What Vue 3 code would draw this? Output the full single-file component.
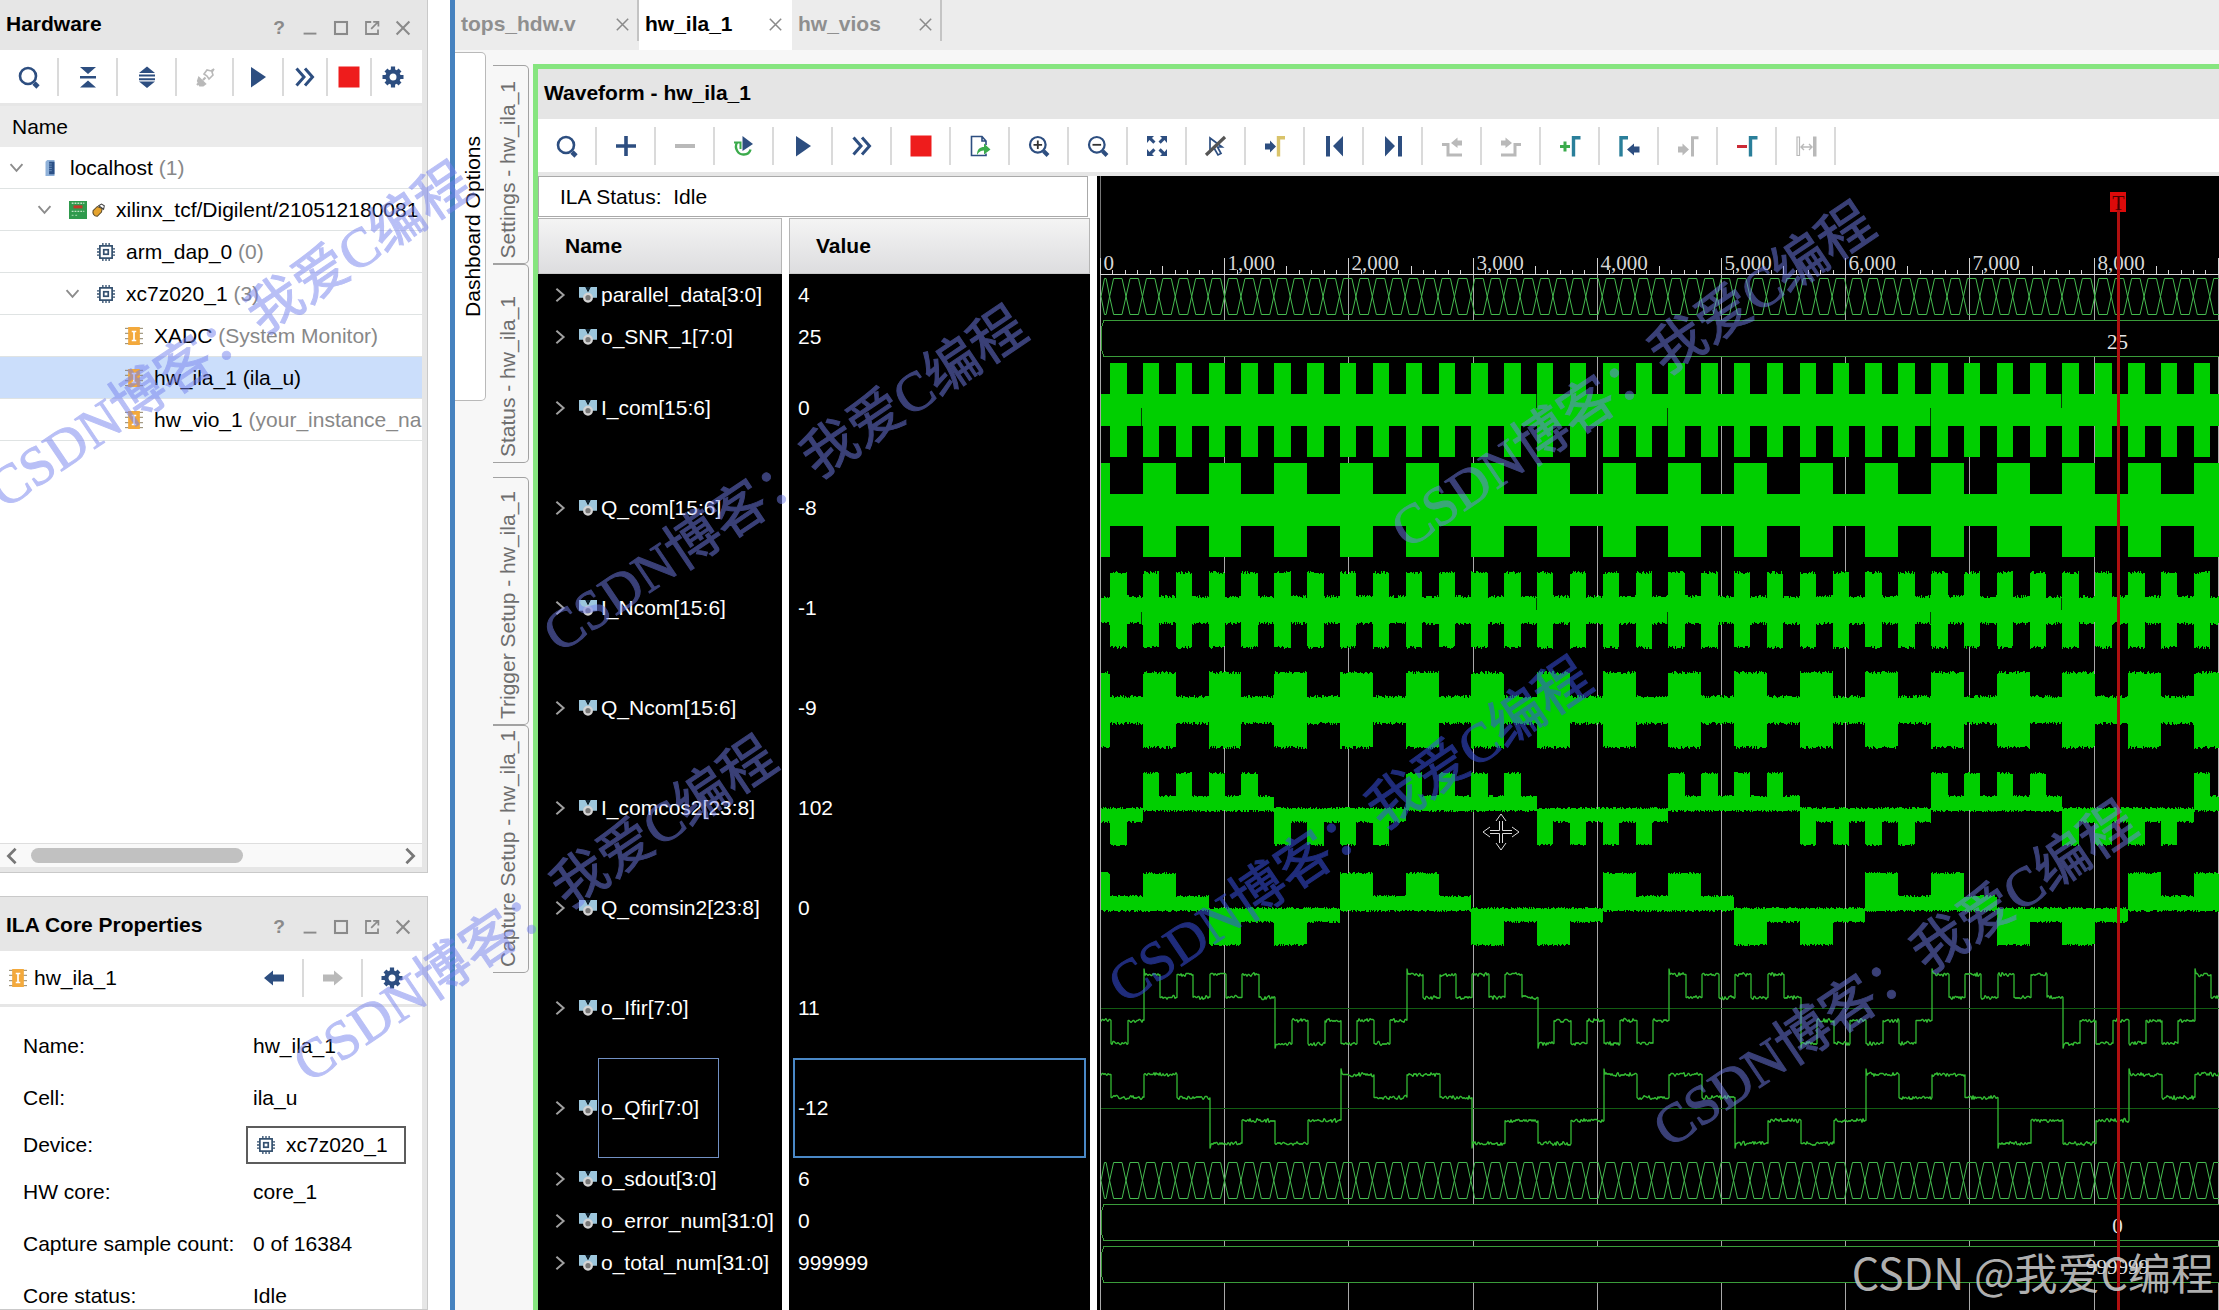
<script setup>
import { h } from 'vue'

const NAVY = '#2d4e80'
const GREY = '#b9b9b9'
const TEAL = '#2a7f9a'

const icons = {
  help: `<text x="10" y="18" text-anchor="middle" font-family="Liberation Sans, sans-serif" font-weight="bold" font-size="24" fill="#8a8a8a">?</text>`,
  min: `<path d="M2 17h16" stroke="#8a8a8a" stroke-width="2.4"/>`,
  max: `<rect x="2.500" y="2.500" width="15" height="15" fill="none" stroke="#8a8a8a" stroke-width="2.6"/>`,
  pop: `<path d="M9 2.500H2.500v15h15V12M11.500 2.200h6.500v6M17.500 2.500L9 11" fill="none" stroke="#8a8a8a" stroke-width="2.200"/>`,
  close: `<path d="M2 2l16 16M18 2L2 18" stroke="#8a8a8a" stroke-width="2.600"/>`,
  tabx: `<path d="M4 4l12 12M16 4L4 16" stroke="#8a8a8a" stroke-width="1.600"/>`,
  search: `<circle cx="9" cy="9" r="8" fill="none" stroke="${NAVY}" stroke-width="2.600"/><path d="M15 16l4 4" stroke="${NAVY}" stroke-width="4.600"/>`,
  collapse: `<path d="M2 0h16l-8 7zM2 20.500h16l-8-7zM2 9h16v2.600H2z" fill="${NAVY}"/>`,
  expand: `<path d="M10 -.5l8 6.500H2zM10 21l8-6.500H2zM2 7.600h16v2H2zM2 11.200h16v2H2z" fill="${NAVY}"/>`,
  plug: `<path d="M2 18l3-3M4 11l6 6-2 1.500H5L3 14zM8 13l2.500-2.500" stroke="${GREY}" stroke-width="2.200" fill="${GREY}"/><path d="M9 7l3-4 4 1 3-2-2 3 1 3-4 4-2-3z" fill="none" stroke="${GREY}" stroke-width="1.600"/>`,
  play: `<path d="M3 0l15 10L3 20.500z" fill="${NAVY}"/>`,
  ff: `<path d="M1.500 1.500L9 10l-7.500 8.500M10 1.500l7.500 8.500-7.500 8.500" fill="none" stroke="${NAVY}" stroke-width="3"/>`,
  stop: `<rect x="-.5" y="-.5" width="21" height="21" fill="#ee1c1c"/>`,
  gear: `<path d="M10 -.5v21M-.5 10h21M3 3l14 14M17 3L3 17" stroke="${NAVY}" stroke-width="4.200"/><circle cx="10" cy="10" r="5.600" fill="#fff" stroke="${NAVY}" stroke-width="4.200"/>`,
  add: `<path d="M10 0v20M0 10h20" stroke="${NAVY}" stroke-width="3.600"/>`,
  sub: `<path d="M0 10h20" stroke="${GREY}" stroke-width="4"/>`,
  restart: `<path d="M8.500 0L19 8 8.500 15z" fill="${NAVY}"/><path d="M3 6.500C0 12 4 19 10 18.500c4 0 6-3 6.500-5" fill="none" stroke="#3bab4c" stroke-width="2.400"/><path d="M0 6.500h6.500V13" fill="none" stroke="#3bab4c" stroke-width="2"/>`,
  exportf: `<path d="M16 9V5l-4-4.500H1.500v19H16v-2M12 .5V5h4" fill="none" stroke="${NAVY}" stroke-width="1.600"/><path d="M7 19c0-6 3-8 7-8V7.500l6.500 6L14 18.500v-4c-3 0-5 1-7 4.500z" fill="#3bab4c"/>`,
  zin: `<circle cx="8.800" cy="8.800" r="7.800" fill="none" stroke="${NAVY}" stroke-width="2.200"/><path d="M14.500 15l4.500 4.500" stroke="${NAVY}" stroke-width="4"/><path d="M8.800 4.500v8.600M4.500 8.800h8.600" stroke="#333" stroke-width="1.800"/>`,
  zout: `<circle cx="8.800" cy="8.800" r="7.800" fill="none" stroke="${NAVY}" stroke-width="2.200"/><path d="M14.500 15l4.500 4.500" stroke="${NAVY}" stroke-width="4"/><path d="M4.500 8.800h8.600" stroke="#333" stroke-width="1.800"/>`,
  fit: `<path d="M0 0h7L5 2l3.500 3.500-2.200 2.200L2.500 4 0 7zM20 0h-7l2 2-3.500 3.500 2.200 2.200L17.500 4 20 7zM0 20h7l-2-2 3.500-3.500-2.200-2.200L2.500 16 0 13zM20 20h-7l2-2-3.500-3.500 2.200-2.200 3.800 3.700L20 13z" fill="${NAVY}"/>`,
  nocur: `<path d="M4 2v14l4-4 4 7 3-1.500-3.500-6.500H16z" fill="none" stroke="${NAVY}" stroke-width="1.700"/><path d="M19 1L0 19" stroke="#555" stroke-width="3.200"/>`,
  gocur: `<path d="M0 7.500h5V4.500l6 6-6 6v-3H0z" fill="${NAVY}"/><path d="M13.500 20.500V1.800H20" fill="none" stroke="#d9c36a" stroke-width="3.400"/>`,
  first: `<path d="M2 0h4v20.500H2zM19 0v20.500L9 10z" fill="${NAVY}"/>`,
  last: `<path d="M15 0h4v20.500h-4zM2 0v20.500L12 10z" fill="${NAVY}"/>`,
  prevt: `<path d="M0 8.500h6V19h14" fill="none" stroke="${GREY}" stroke-width="3"/><path d="M20 4.500h-4.500V1.500L9 7l6.500 5V9.500H20z" fill="${GREY}"/>`,
  nextt: `<path d="M20 8.500h-6V19H0" fill="none" stroke="${GREY}" stroke-width="3"/><path d="M0 4.500h4.500V1.500L11 7l-6.500 5V9.500H0z" fill="${GREY}"/>`,
  addm: `<path d="M5 5.500v10M0 10.500h10" stroke="#3bab4c" stroke-width="3"/><path d="M13.500 20.500V1.800H20.500" fill="none" stroke="${TEAL}" stroke-width="3.400"/>`,
  prevm: `<path d="M2 20.500V1.800h7" fill="none" stroke="${TEAL}" stroke-width="3.400"/><path d="M20.500 10.500h-5.500v-3l-7 6 7 6v-3h5.500z" fill="${NAVY}"/>`,
  nextm: `<path d="M0 10.500h4.500v-3l6.500 6-6.500 6v-3H0z" fill="${GREY}"/><path d="M14.500 20.500V1.800H20.500" fill="none" stroke="${GREY}" stroke-width="3"/>`,
  delm: `<path d="M0 10.500h10" stroke="#cc2a36" stroke-width="3"/><path d="M13.500 20.500V1.800H20.500" fill="none" stroke="${TEAL}" stroke-width="3.400"/>`,
  span: `<path d="M1 1h2.500v18.500H1z" fill="none" stroke="${GREY}" stroke-width="1.200"/><path d="M17 .5h3.500v20H17z" fill="${GREY}"/><path d="M5.500 11h10M8 8l-3 3 3 3M13 8l3 3-3 3" fill="none" stroke="${GREY}" stroke-width="1.400"/>`,
  back: `<path d="M0 10l9-7.500V6.500h11v7H9v4z" fill="${NAVY}"/>`,
  fwd: `<path d="M20 10l-9-7.500V6.500H0v7h11v4z" fill="${GREY}"/>`,
  down: `<path d="M3 6l7 8 7-8" fill="none" stroke="#8c8c8c" stroke-width="2.200"/>`,
  right: `<path d="M6 3l8 7-8 7" fill="none" stroke="#a0a0a0" stroke-width="2.200"/>`,
  sleft: `<path d="M14 2L6 10l8 8" fill="none" stroke="#777" stroke-width="3"/>`,
  sright: `<path d="M6 2l8 8-8 8" fill="none" stroke="#777" stroke-width="3"/>`,
  server: `<path d="M5 3l2-2h8v18H5z" fill="#8fb1d9"/><path d="M9 3h6v14H9z" fill="#2c5187"/><path d="M9 5.500h3M9 8h3M9 10.500h3M9 13h3" stroke="#6f93c0" stroke-width="1"/>`,
  board: `<rect x="0" y="0" width="20" height="20" fill="#2f9a4d"/><path d="M5 6.500h10" stroke="#c0392b" stroke-width="3.400"/><path d="M3 2.500h14M3 11.500h14" stroke="#bfe3c4" stroke-width="1.400" stroke-dasharray="2 1.200"/><path d="M3 16h8" stroke="#8fcf9d" stroke-width="1.400" stroke-dasharray="2 2"/>`,
  usb: `<path d="M3 11l6-6 7 3-1 5-6 6c-5 0-7-4-6-8z" fill="#e5a32e" stroke="#5a4a2a" stroke-width="1.500"/><path d="M11 4l4-2.500 4 2.500-1 5z" fill="#fff" stroke="#444" stroke-width="1.500"/>`,
  chip: `<path d="M6.500 0v3M13.500 0v3M10 0v3M6.500 17v3M13.500 17v3M10 17v3M0 6.500h3M0 13.500h3M0 10h3M17 6.500h3M17 13.500h3M17 10h3" stroke="#34506f" stroke-width="1.500"/><rect x="3.200" y="3.200" width="13.600" height="13.600" fill="#fff" stroke="#34506f" stroke-width="1.900"/><rect x="7.500" y="7.500" width="5" height="5" fill="#fff" stroke="#34506f" stroke-width="1.900"/>`,
  core: `<path d="M0 1.500h20M0 7h20M0 13h20M0 18.500h20" stroke="#8f8468" stroke-width="1.100"/><rect x="3.500" y="0" width="13" height="20" fill="#f3a93c"/><path d="M7.500 5h5M7.500 15h5M10 5v10" stroke="#fff" stroke-width="1.900"/>`,
  probe: `<path d="M0 1h7l3 6 3-6h7v12H0z" fill="#9cc6dc"/><path d="M7.500 1h5l-2.500 5z" fill="#0d2230"/><circle cx="10" cy="13" r="4.200" fill="#777" stroke="#d4d4d4" stroke-width="2.600"/>`,
}

const Icon = (p) => h('svg', {
  viewBox: '0 0 20 20', width: p.size || 20, height: p.size || 20,
  'aria-hidden': 'true', style: 'display:block;overflow:visible;flex:none', innerHTML: icons[p.name],
})
Icon.props = ['name', 'size']

const winButtons = ['help', 'min', 'max', 'pop', 'close']
const hwTools = [
  ['search', 59], ['collapse', 59], ['expand', 59], ['plug', 57],
  ['play', 50], ['ff', 44], ['stop', 44], ['gear', 44],
]
const waveTools = ['search', 'add', 'sub', 'restart', 'play', 'ff', 'stop', 'exportf', 'zin', 'zout', 'fit', 'nocur',
  'gocur', 'first', 'last', 'prevt', 'nextt', 'addm', 'prevm', 'nextm', 'delm', 'span']

const tree = [
  { lvl: 0, open: true, icons: ['server'], name: 'localhost', note: '(1)' },
  { lvl: 1, open: true, icons: ['board', 'usb'], name: 'xilinx_tcf/Digilent/210512180081' },
  { lvl: 2, icons: ['chip'], name: 'arm_dap_0', note: '(0)' },
  { lvl: 2, open: true, icons: ['chip'], name: 'xc7z020_1', note: '(3)' },
  { lvl: 3, icons: ['core'], name: 'XADC', note: '(System Monitor)' },
  { lvl: 3, icons: ['core'], name: 'hw_ila_1', note: '(ila_u)', sel: true },
  { lvl: 3, icons: ['core'], name: 'hw_vio_1', note: '(your_instance_na' },
]

const tabs = [
  { name: 'tops_hdw.v', w: 184 },
  { name: 'hw_ila_1', w: 153, active: true },
  { name: 'hw_vios', w: 150 },
]

const sideTabs = [
  { name: 'Settings - hw_ila_1', len: 199 },
  { name: 'Status - hw_ila_1', len: 199 },
  { name: 'Trigger Setup - hw_ila_1', len: 248, gap: true },
  { name: 'Capture Setup - hw_ila_1', len: 248 },
]

const signals = [
  { name: 'parallel_data[3:0]', value: '4' },
  { name: 'o_SNR_1[7:0]', value: '25' },
  { name: 'I_com[15:6]', value: '0', tall: true },
  { name: 'Q_com[15:6]', value: '-8', tall: true },
  { name: 'I_Ncom[15:6]', value: '-1', tall: true },
  { name: 'Q_Ncom[15:6]', value: '-9', tall: true },
  { name: 'I_comcos2[23:8]', value: '102', tall: true },
  { name: 'Q_comsin2[23:8]', value: '0', tall: true },
  { name: 'o_Ifir[7:0]', value: '11', tall: true },
  { name: 'o_Qfir[7:0]', value: '-12', tall: true, sel: true },
  { name: 'o_sdout[3:0]', value: '6' },
  { name: 'o_error_num[31:0]', value: '0' },
  { name: 'o_total_num[31:0]', value: '999999' },
]

/* ---- waveform geometry ---- */
const SPAN = 2400
const T0 = 4
const PER_K = 124.2
const SYM0 = 12.6
const SYM = 16.42

let seed = 7
const rnd = () => {
  seed = (seed * 1103515245 + 12345) % 2147483648
  return seed / 2147483648
}
const symAt = (x) => Math.floor((x - SYM0) / SYM)
const mod = (a, b) => ((a % b) + b) % b
const iHigh = (n) => mod(n, 2) === 0
const qHigh = (n) => mod(n, 4) >= 2
const iPos = (n) => mod(Math.floor((n - 2) / 8), 2) === 0
const qPos = (n) => mod(Math.floor((n + 2) / 8), 2) === 0

function fill(top, bottom, noise) {
  const up = []
  const dn = []
  for (let x = T0; x < SPAN; x++) {
    const n = symAt(x)
    const a = Math.round(top(n) - rnd() * noise)
    const b = Math.round(bottom(n) + rnd() * noise)
    up.push(`${x} ${a}L${x + 1} ${a}`)
    dn.push(`${x + 1} ${b}L${x} ${b}`)
  }
  return 'M' + up.join('L') + 'L' + dn.reverse().join('L') + 'Z'
}
const env = (c, big, small, high, noise) =>
  fill((n) => c - (high(n) ? big : small), (n) => c + (high(n) ? big : small), noise)
const signed = (c, high, pos) =>
  fill((n) => (pos(n) ? c - (high(n) ? 35 : 12) : c),
    (n) => (pos(n) ? c + 1 : c + (high(n) ? 35 : 12)), 2)

const fills = [
  env(234, 47, 16, iHigh, 0),
  env(334, 47, 16, qHigh, 0),
  env(434, 36, 12, iHigh, 3),
  env(534, 36, 12, qHigh, 3),
  signed(633, iHigh, iPos),
  signed(733, qHigh, qPos),
]

function fir(c, high, pos) {
  const lvl = (n) => c + (pos(n) ? -1 : 1) * (high(n) ? 34.5 : 11.5)
  let d = ''
  let last = null
  for (let x = T0; x < SPAN; x++) {
    const n = symAt(x - 1)
    let y = lvl(n) + Math.round(rnd() * 3.6 - 1.8)
    if (last !== null && last !== n && lvl(last) !== lvl(n)) {
      y = lvl(n) + (pos(last) !== pos(n) ? (pos(n) ? -6 : 5) : 0)
      d += `L${x} ${lvl(last)}`
    }
    d += `${d ? 'L' : 'M'}${x} ${y}`
    last = n
  }
  return d
}
const firs = [fir(833, iHigh, iPos), fir(933, qHigh, qPos)]

function hexBus(t, b) {
  const m = (t + b) / 2
  let d = ''
  for (let n = -1; SYM0 + n * SYM < SPAN; n++) {
    const a = n < 0 ? T0 : SYM0 + n * SYM
    const e = SYM0 + (n + 1) * SYM
    const s = n < 0 ? 3.5 : 4
    d += `M${a} ${m}L${a + s} ${t}L${e - s} ${t}L${e} ${m}L${e - s} ${b}L${a + s} ${b}Z`
  }
  return d
}
const hexes = [hexBus(102.5, 138.5), hexBus(986.5, 1022.5)]
const flat = (t, b) => `M${SPAN} ${t}H${T0 + 3}L${T0} ${t + 8}V${b - 8}L${T0 + 3} ${b}H${SPAN}`
const flats = [
  { d: flat(144.5, 180.5), text: '25', y: 173 },
  { d: flat(1028.5, 1064.5), text: '0', y: 1057 },
  { d: flat(1070.5, 1106.5), text: '999999', y: 1098 },
]

const majors = Array.from({ length: 10 }, (_, i) => ({
  x: Math.round(T0 + i * PER_K) - 0.5,
  label: (i * 1000).toLocaleString('en-US'),
}))
const labels = majors.slice(0, 9)
let ticks = ''
for (let i = 1; i < 100; i++) {
  if (i % 10) ticks += `M${Math.round(T0 + i * PER_K / 10) - 0.5} 98v${i % 5 ? -4 : -8}`
}
const notches = [[2, 1], [26, 0], [34, 1], [50, 1], [58, 0]].map(([n, low]) => {
  const x = Math.round(SYM0 + n * SYM) - 0.5
  return low ? `M${x} 232v18M${x} 436v12` : `M${x} 218v14M${x} 422v12`
}).join('')
const TRIG = T0 + 8.192 * PER_K

const marks = [
  { x: 230, y: 336, tone: 'pale' },
  { x: 785, y: 480, tone: 'pale' },
  { x: 535, y: 910, tone: 'pale' },
  { x: 1633, y: 376, tone: 'pale' },
  { x: 1350, y: 831, tone: 'deep' },
  { x: 1895, y: 975, tone: 'pale' },
]
</script>

<template>
  <div class="app">
    <aside class="left">
      <section class="panel">
        <header class="phead">
          <h2>Hardware</h2>
          <button v-for="b in winButtons" :key="b" class="wbtn" :aria-label="b"><Icon :name="b" size="16" /></button>
        </header>
        <div class="bar">
          <button v-for="[t, w] in hwTools" :key="t" class="tool" :style="{ width: w + 'px' }" :aria-label="t"><Icon :name="t" /></button>
        </div>
        <div class="colhead">Name</div>
        <ul class="tree">
          <li v-for="r in tree" :key="r.name" :class="['l' + r.lvl, { sel: r.sel }]">
            <span class="tw"><Icon v-if="r.open" name="down" size="17" /></span>
            <Icon v-for="ic in r.icons" :key="ic" :name="ic" :size="ic === 'usb' ? 14 : 18" />
            <span class="nm">{{ r.name }} <i v-if="r.note">{{ r.note }}</i></span>
          </li>
        </ul>
        <div class="hscroll">
          <button aria-label="scroll left"><Icon name="sleft" size="18" /></button>
          <div class="track"><div class="thumb"></div></div>
          <button aria-label="scroll right"><Icon name="sright" size="18" /></button>
        </div>
      </section>

      <section class="panel props">
        <header class="phead tall">
          <h2>ILA Core Properties</h2>
          <button v-for="b in winButtons" :key="b" class="wbtn" :aria-label="b"><Icon :name="b" size="16" /></button>
        </header>
        <div class="bar">
          <span class="obj"><Icon name="core" size="18" />hw_ila_1</span>
          <button class="tool" aria-label="back"><Icon name="back" /></button>
          <button class="tool" aria-label="forward"><Icon name="fwd" /></button>
          <button class="tool" aria-label="settings"><Icon name="gear" /></button>
        </div>
        <dl>
          <dt>Name:</dt><dd>hw_ila_1</dd>
          <dt>Cell:</dt><dd>ila_u</dd>
          <dt class="tight">Device:</dt><dd class="tight"><button class="device"><Icon name="chip" size="18" />xc7z020_1</button></dd>
          <dt>HW core:</dt><dd>core_1</dd>
          <dt>Capture sample count:</dt><dd>0 of 16384</dd>
          <dt>Core status:</dt><dd>Idle</dd>
        </dl>
      </section>
    </aside>

    <main class="right">
      <nav class="tabs">
        <div v-for="t in tabs" :key="t.name" :class="['tab', { active: t.active }]" :style="{ width: t.w + 'px' }">
          <a href="#">{{ t.name }}</a>
          <button :aria-label="'close ' + t.name"><Icon name="tabx" size="19" /></button>
        </div>
      </nav>
      <div class="work">
        <div class="dash"><button><span>Dashboard Options</span></button></div>
        <div class="side">
          <button v-for="s in sideTabs" :key="s.name" :class="{ gap: s.gap }" :style="{ height: s.len + 'px' }"><span>{{ s.name }}</span></button>
        </div>
        <section class="wavewin">
          <h2>Waveform - hw_ila_1</h2>
          <div class="bar wbar">
            <button v-for="t in waveTools" :key="t" class="tool" :aria-label="t"><Icon :name="t" /></button>
          </div>
          <div class="wbody">
            <div class="list">
              <p class="status">ILA Status:&nbsp; Idle</p>
              <table>
                <thead><tr><th class="cn">Name</th><th class="cg"></th><th>Value</th></tr></thead>
                <tbody>
                  <tr v-for="s in signals" :key="s.name" :class="{ tall: s.tall, sel: s.sel }">
                    <td><div class="sig"><Icon name="right" size="18" /><Icon name="probe" size="18" /><span>{{ s.name }}</span></div></td>
                    <td class="cg"></td>
                    <td><div class="val">{{ s.value }}</div></td>
                  </tr>
                </tbody>
              </table>
              <div class="rest"></div>
            </div>
            <div class="plot">
              <svg width="100%" height="100%" shape-rendering="crispEdges">
                <path d="M3.500 0V1200" stroke="#777" />
                <path v-for="m in majors" :key="m.x" :d="`M${m.x} 98V1400`" stroke="#a8a8a8" />
                <path v-for="m in majors" :key="m.label" :d="`M${m.x} 82V98`" stroke="#d0d0d0" />
                <path :d="'M3 98.500H2400' + ticks" stroke="#d8d8d8" />
                <g fill="#d8d8d8" font-family="Liberation Serif, serif" font-size="21">
                  <text v-for="m in labels" :key="m.label" :x="m.x + 3" y="94">{{ m.label }}</text>
                </g>
                <path d="M4 832.500H2400M4 932.500H2400" stroke="#125c12" />
                <path v-for="(d, i) in fills" :key="i" :d="d" fill="#00cf00" />
                <path :d="notches" stroke="#043a04" />
                <g shape-rendering="auto" fill="none">
                  <path v-for="(d, i) in firs" :key="i" :d="d" stroke="#33bb33" stroke-width="1.300" stroke-linejoin="bevel" />
                  <path v-for="(d, i) in hexes" :key="i" :d="d" stroke="#46bb50" />
                </g>
                <path v-for="f in flats" :key="f.y" :d="f.d" fill="#000" stroke="#3a9c3a" />
                <g fill="#e6e6e6" font-family="Liberation Serif, serif" font-size="21" text-anchor="middle">
                  <text v-for="f in flats" :key="f.text" :x="TRIG - 1" :y="f.y">{{ f.text }}</text>
                </g>
                <rect :x="TRIG - 8" y="16" width="16" height="20" fill="#dd0a0a" />
                <path :d="`M${Math.round(TRIG) + 0.5} 28V1400`" stroke="#b01010" stroke-width="3" />
                <text :x="TRIG" y="34" text-anchor="middle" font-family="Liberation Serif, serif" font-size="20" fill="#400">T</text>
                <g transform="translate(404 656)" fill="none" stroke="#ddd" shape-rendering="auto">
                  <path d="M-1.500-11V-1.500H-11M1.500-11V-1.500H11M-1.500 11V1.500H-11M1.500 11V1.500H11M-5-11L0-18 5-11M-5 11L0 18 5 11M-11-5L-18 0-11 5M11-5L18 0 11 5" />
                </g>
              </svg>
            </div>
          </div>
        </section>
      </div>
    </main>

    <div class="marks" aria-hidden="true">
      <span v-for="m in marks" :key="m.x" :class="m.tone" :style="{ left: m.x + 'px', top: m.y + 'px' }">CSDN博客：我爱C编程</span>
      <b>CSDN @我爱C编程</b>
    </div>
  </div>
</template>

<style>
body { margin: 0; overflow: hidden; }
</style>

<style scoped>
* { box-sizing: border-box; }
.app {
  position: relative;
  display: flex;
  height: 100vh;
  overflow: hidden;
  background: #fff;
  color: #000;
  font: 21px/24px "Liberation Sans", Arial, sans-serif;
  white-space: nowrap;
}
button { margin: 0; padding: 0; border: 0; background: none; font: inherit; color: inherit; display: flex; align-items: center; justify-content: center; }
h2 { margin: 0; font-size: 21px; line-height: 24px; font-weight: bold; }

.left { flex: none; width: 450px; padding-right: 22px; display: flex; flex-direction: column; gap: 23px; }
.panel { background: #e6e6e6; border: solid #c9c9c9; border-width: 0 1px 1px 0; padding: 0 5px 5px 0; height: 873px; flex: none; display: flex; flex-direction: column; }
.props { border-top-width: 1px; flex: 1; height: auto; min-height: 0; overflow: hidden; }
.phead { display: flex; align-items: center; height: 50px; flex: none; padding: 0 4px 0 6px; }
.phead h2 { flex: 1; padding-bottom: 2px; }
.phead.tall { height: 54px; }
.phead.tall h2 { padding: 2px 0 0; }
.wbtn { width: 31px; height: 24px; margin-top: 6px; }
.bar { display: flex; align-items: center; height: 56px; flex: none; background: #fff; border-bottom: 3px solid #e6e6e6; }
.tool { width: 59px; height: 38px; border-right: 2px solid #dadada; flex: none; }
.left .tool:last-child { border-color: transparent; }
.obj { flex: 1; display: flex; align-items: center; gap: 7px; padding-left: 9px; }
.colhead { height: 41px; line-height: 41px; padding-left: 12px; background: #ebebeb; flex: none; }
.tree { list-style: none; margin: 0; padding: 0; background: #fff; flex: 1; }
.tree li { height: 42px; display: flex; align-items: center; overflow: hidden; border-bottom: 1px solid #dfe3e3; }
.tree li.sel { background: #cbdefb; }
.tree .tw { width: 33px; flex: none; }
.tree svg + svg { margin-left: 4px; }
.tree .nm { padding-left: 11px; }
.tree i { font-style: normal; color: #888; }
.tree .sel i { color: #000; }
.l0 { padding-left: 8px; }
.l1 { padding-left: 36px; }
.l2 { padding-left: 64px; }
.l3 { padding-left: 92px; }
.hscroll { display: flex; align-items: center; height: 24px; flex: none; background: #f9f9f9; border-top: 1px solid #dedede; padding: 0 2px; }
.hscroll button { width: 20px; }
.track { flex: 1; padding: 0 9px; }
.thumb { width: 59%; height: 15px; border-radius: 8px; background: #c1c1c1; }
dl { margin: 0; flex: 1; background: #fff; padding: 13px 0 0 23px; display: grid; grid-template-columns: 230px 1fr; align-content: start; }
dt, dd { margin: 0; height: 52px; display: flex; align-items: center; }
.tight { height: 42px; }
.device { height: 38px; width: 160px; margin-left: -7px; border: 2px solid #5c5c5c; gap: 11px; justify-content: flex-start; padding-left: 9px; }

.right { flex: 1; min-width: 0; border-left: 5px solid #4682bf; background: #f7f7f7; display: flex; flex-direction: column; }
.tabs { display: flex; height: 50px; flex: none; background: #ececec; }
.tab { display: flex; align-items: center; justify-content: space-between; padding: 0 7px 2px 6px; position: relative; font-weight: bold; }
.tab a { color: #8f8f8f; text-decoration: none; }
.tab:not(.active)::after { content: ""; position: absolute; right: 0; top: 0; width: 2px; height: 41px; background: #c4c4c4; }
.tab.active { background: #fff; }
.tab.active a { color: #000; }
.work { flex: 1; min-height: 0; display: flex; }
.dash { width: 31px; padding-top: 2px; flex: none; }
.dash button { width: 31px; height: 349px; background: #fff; border: 1px solid #b9b9b9; border-left: 0; border-radius: 0 5px 5px 0; padding-left: 6px; }
.side { width: 36px; margin: 15px 4px 0 7px; flex: none; }
.side button { width: 36px; border: 1px solid #a2a2a2; border-left: 0; border-radius: 0 5px 5px 0; color: #6e6e6e; align-items: flex-end; padding: 0 5px 5px 0; }
.side button.gap { margin-top: 14px; }
.dash span, .side span { writing-mode: vertical-rl; transform: rotate(180deg); }
.wavewin { flex: 1; min-width: 0; margin-top: 14px; border: solid #86e57f; border-width: 5px 0 0 5px; display: flex; flex-direction: column; background: #fff; }
.wavewin h2 { height: 50px; flex: none; line-height: 48px; background: #e5e5e5; padding-left: 6px; }
.wbar { height: 57px; border-bottom-width: 4px; }
.wbody { flex: 1; min-height: 0; display: flex; gap: 7px; }
.list { width: 552px; flex: none; display: flex; flex-direction: column; }
.status { margin: 0 2px 1px 0; height: 41px; line-height: 39px; border: 1px solid #a9a9a9; padding-left: 21px; flex: none; }
table { border-collapse: separate; border-spacing: 0; table-layout: fixed; width: 100%; color: #fff; background: #000; }
th { height: 56px; padding: 0 0 0 26px; text-align: left; color: #000; background: linear-gradient(#f4f4f4, #dddddf); border: 1px solid #b5b5b5; border-bottom-color: #ccc; }
.cn { width: 244px; }
th.cg, td.cg { width: 7px; padding: 0; background: #fff; border: 0; }
td { height: 42px; padding: 0; }
.tall td { height: 100px; }
.sig { display: flex; align-items: center; height: 100%; padding-left: 13px; }
.sig svg + svg { margin-left: 10px; }
.sig span { margin-left: 1px; padding-left: 2px; height: 100%; border: 1px solid transparent; display: flex; align-items: center; }
.sel .sig span { height: 100px; width: 121px; border-color: #7190c4; }
.val { height: 100%; display: flex; align-items: center; border: 2px solid transparent; margin: 0 4px 0 4px; padding-left: 3px; }
.sel .val { height: 100px; border-color: #4a88c6; }
.rest { flex: 1; background: linear-gradient(to right, #000 244px, #fff 244px 251px, #000 251px); }
.plot { flex: 1; min-width: 0; background: #000; overflow: hidden; }
.plot svg { display: block; }

.marks { position: absolute; inset: 0; pointer-events: none; overflow: hidden; }
.marks span { position: absolute; font: 55px/60px "Liberation Serif", "Noto Sans CJK SC", serif; transform: translate(-50%, -50%) rotate(-34deg); -webkit-text-stroke: 1px; }
.marks .pale { color: #7480ee; opacity: 0.5; }
.marks .deep { color: #3a50e0; opacity: 0.55; }
.marks b { position: absolute; right: 5px; bottom: 9px; font: 43px/60px "Noto Sans CJK SC", sans-serif; color: rgba(200, 200, 200, 0.88); }
</style>
